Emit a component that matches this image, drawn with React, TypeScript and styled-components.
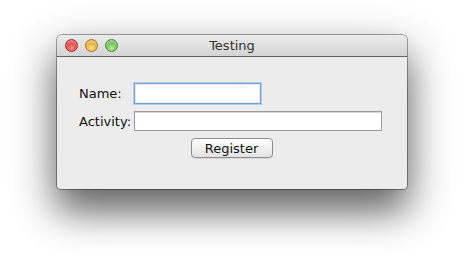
import React from "react";
import styled, { createGlobalStyle } from "styled-components";

const Global = createGlobalStyle`
  html, body { margin: 0; padding: 0; background: #ffffff; }
  body { width: 464px; height: 268px; overflow: hidden; }
`;

const Page = styled.div`
  padding: 35px 0 0 57px;
  width: 464px;
  height: 268px;
  box-sizing: border-box;
  font-family: "DejaVu Sans", "Lucida Grande", sans-serif;
`;

const Window = styled.div`
  width: 350px;
  height: 154px;
  border-radius: 5px 5px 4px 4px;
  background: #ececec;
  box-shadow: 0 0 0 1px rgba(0, 0, 0, 0.35), 0 22px 36px rgba(0, 0, 0, 0.5),
    0 14px 50px rgba(0, 0, 0, 0.25);
  display: flex;
  flex-direction: column;
  overflow: hidden;
`;

const TitleBar = styled.div`
  height: 21px;
  flex: 0 0 21px;
  background: linear-gradient(#ebebeb, #d4d4d4);
  border-bottom: 1px solid #616161;
  display: flex;
  align-items: center;
  position: relative;
  padding-left: 8px;
  gap: 7px;
`;

const Light = styled.div<{ $c1: string; $c2: string; $b: string }>`
  width: 13px;
  height: 13px;
  border-radius: 50%;
  box-sizing: border-box;
  border: 1px solid ${(p) => p.$b};
  background: radial-gradient(circle at 50% 75%, ${(p) => p.$c1} 0%, ${(p) => p.$c2} 75%);
  box-shadow: inset 0 2px 2px rgba(255, 255, 255, 0.5);
`;

const Title = styled.div`
  position: absolute;
  left: 0;
  right: 0;
  top: 0;
  bottom: 0;
  display: flex;
  align-items: center;
  justify-content: center;
  font-size: 13px;
  color: #333;
  pointer-events: none;
`;

const Body = styled.div`
  padding: 26px 25px 0 22px;
  display: grid;
  grid-template-columns: 55px 1fr;
  row-gap: 7px;
  align-items: center;
`;

const Label = styled.label`
  font-size: 13px;
  color: #111;
`;

const Field = styled.div<{ $w?: number; $focus?: boolean }>`
  height: ${(p) => (p.$focus ? 21 : 20)}px;
  width: ${(p) => (p.$w ? `${p.$w}px` : "auto")};
  box-sizing: border-box;
  background: #fff;
  border: 1px solid ${(p) => (p.$focus ? "#7b9ed0" : "#9a9a9a")};
  box-shadow: ${(p) =>
    p.$focus ? "0 0 0 1px #b6cde9, inset 0 0 0 1px #e0ebf7" : "inset 0 1px 0 #d8d8d8"};
`;

const ButtonRow = styled.div`
  grid-column: 1 / span 2;
  display: flex;
  justify-content: center;
  padding-left: 2px;
`;

const Button = styled.button`
  width: 82px;
  height: 20px;
  border-radius: 4px;
  border: 1px solid #8c8c8c;
  background: linear-gradient(#ffffff, #f0f0f0 50%, #e4e4e4);
  font-family: "DejaVu Sans", sans-serif;
  font-size: 13px;
  color: #111;
  padding: 0;
  box-shadow: 0 1px 0 rgba(0, 0, 0, 0.08);
`;

export default function App() {
  return (
    <>
      <Global />
      <Page>
        <Window>
          <TitleBar>
            <Light $c1="#ff8c8c" $c2="#d0252a" $b="#9e2a2a" />
            <Light $c1="#ffe08a" $c2="#dd9a1a" $b="#a87419" />
            <Light $c1="#b8f09a" $c2="#55a83a" $b="#4a8a32" />
            <Title>Testing</Title>
          </TitleBar>
          <Body>
            <Label>Name:</Label>
            <Field $w={127} $focus />
            <Label>Activity:</Label>
            <Field />
            <ButtonRow>
              <Button>Register</Button>
            </ButtonRow>
          </Body>
        </Window>
      </Page>
    </>
  );
}
